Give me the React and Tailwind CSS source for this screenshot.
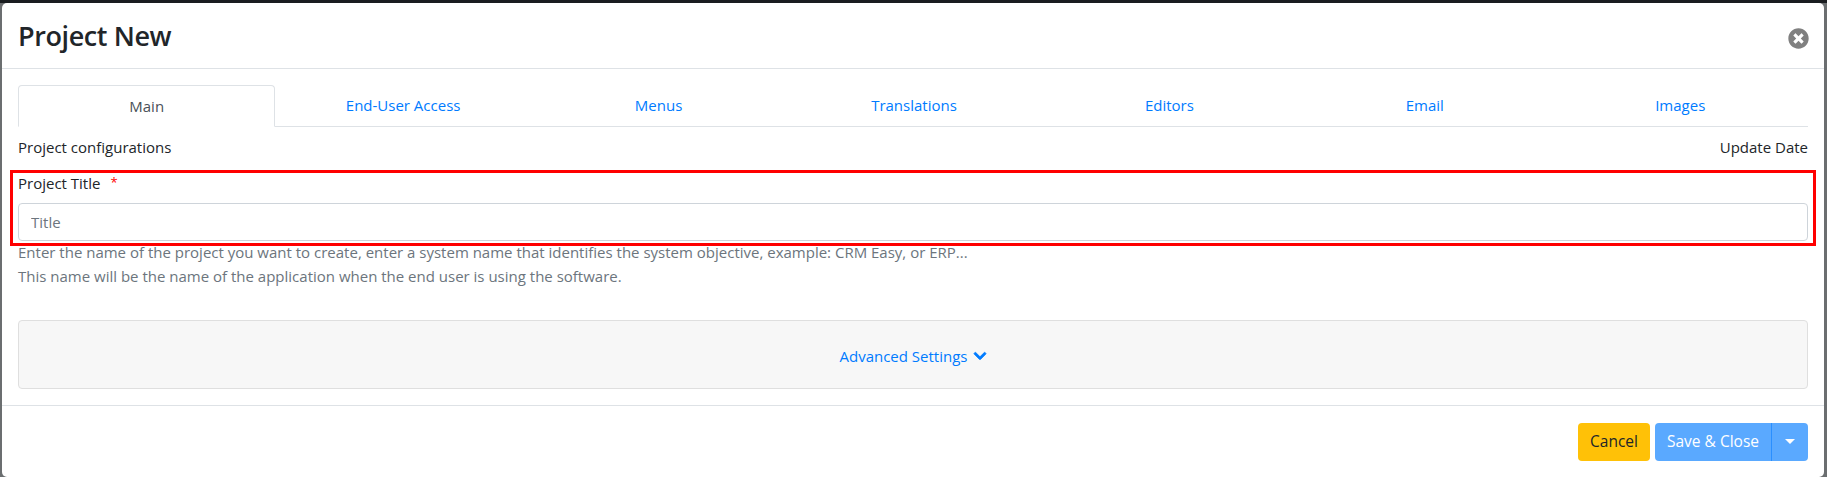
import { FaChevronDown, FaTimesCircle } from "react-icons/fa";

const TABS = ["Main", "End-User Access", "Menus", "Translations", "Editors", "Email", "Images"];

const App = () => {
  return (
    <div className="h-[477px] w-[1827px] overflow-hidden border-t-[3px] border-[#1a1d20] bg-[#6b6e70] font-['Open_Sans',sans-serif] text-[15px] text-[#212529]">
      <div className="mx-[2px] flex h-[474px] w-[1822px] flex-col rounded-[5px] bg-white">
        {/* header */}
        <div className="flex h-[66px] items-center justify-between border-b border-[#dee2e6] px-4">
          <h5 className="text-[27px] font-semibold leading-none tracking-[-0.4px]">Project New</h5>
          <FaTimesCircle className="mr-[-1px] mt-[5px] text-[21px] text-[#808080]" />
        </div>

        {/* body */}
        <div className="flex-1 px-4 pt-4">
          <div className="flex h-[42px] border-b border-[#dee2e6]">
            {TABS.map((tab, i) => (
              <a
                key={tab}
                className={
                  i === 0
                    ? "-mb-px flex flex-1 items-center justify-center rounded-t-[4px] border border-[#dee2e6] border-b-white bg-white text-[#495057]"
                    : "flex flex-1 items-center justify-center text-[#007bff]"
                }
              >
                {tab}
              </a>
            ))}
          </div>

          <div className="mt-[8px] flex h-[24px] items-center justify-between">
            <span>Project configurations</span>
            <span>Update Date</span>
          </div>

          <div className="relative mt-[12px]">
            <div className="absolute inset-x-[-8px] top-[-1px] h-[76px] border-[3px] border-[#ff0000]"></div>
            <label className="flex h-[24px] items-center">
              Project Title
              <span className="ml-[10px] text-[13px] text-[#ff0000]">*</span>
            </label>
            <input
              placeholder="Title"
              className="mt-[8px] block h-[38px] w-full rounded-[4px] border border-[#ced4da] px-3 text-[15px] placeholder:text-[#6c757d]"
            />
          </div>

          <div className="text-[15px] leading-[23.5px] text-[#6c757d]">
            <div>Enter the name of the project you want to create, enter a system name that identifies the system objective, example: CRM Easy, or ERP...</div>
            <div>This name will be the name of the application when the end user is using the software.</div>
          </div>

          <div className="mt-[32px] flex h-[69px] items-center justify-center gap-[5px] rounded-[4px] border border-[#dfdfdf] bg-[#f7f7f7] pt-[3px] text-[#007bff]">
            <span>Advanced Settings</span>
            <FaChevronDown className="text-[14px]" stroke="currentColor" strokeWidth="30" />
          </div>
        </div>

        {/* footer */}
        <div className="flex h-[72px] items-center justify-end gap-[5px] border-t border-[#dee2e6] px-4 text-[15.5px]">
          <button className="h-[38px] w-[72px] rounded-[4px] bg-[#ffc107]">Cancel</button>
          <div className="flex h-[38px] overflow-hidden rounded-[4px] bg-[#5aa9ff] text-white">
            <button className="w-[117px] border-r border-[#2a8fff]">Save &amp; Close</button>
            <button className="flex w-[36px] items-center justify-center">
              <span className="h-0 w-0 border-x-[5px] border-t-[5px] border-x-transparent border-t-white"></span>
            </button>
          </div>
        </div>
      </div>
    </div>
  );
};

export default App;
